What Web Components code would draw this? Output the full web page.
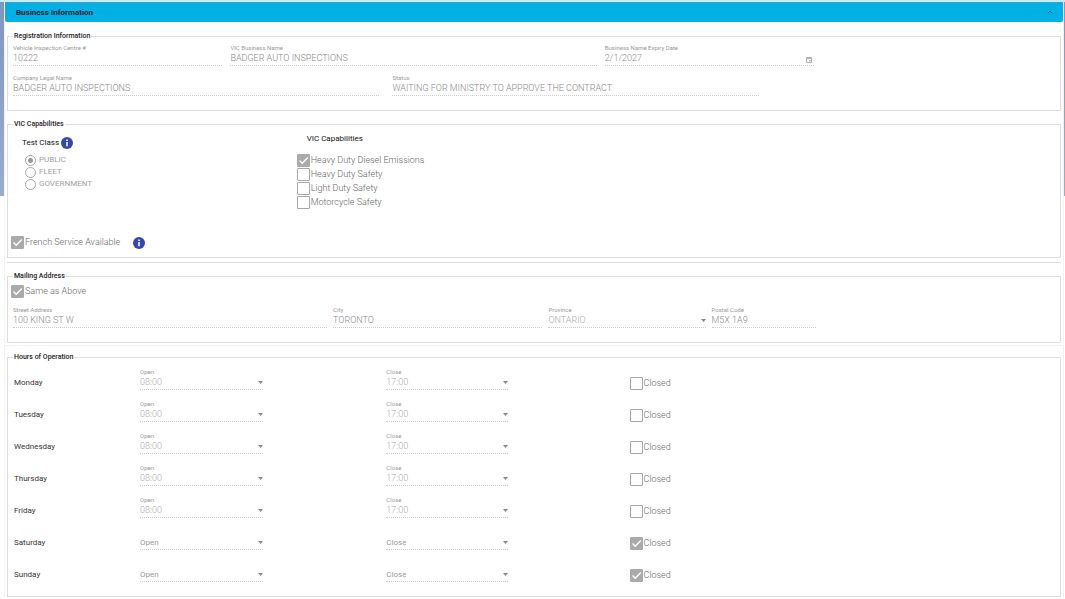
<!DOCTYPE html>
<html lang="en">
<head>
<meta charset="utf-8">
<meta name="viewport" content="width=device-width, initial-scale=1">
<title>Business Information</title>
<style>
  body { margin: 0; background: #fff; font-family: Roboto, "Liberation Sans", sans-serif; font-size: 9px; color: #333; }
  hr { margin: 4px 0 0; border: 0; border-top: 1px solid #dcdcdc; }
  field-set + field-set, hr + field-set { margin-top: 9px; }
  .w10 { flex: 0 0 10%; } .w15 { flex: 0 0 15%; } .w20 { flex: 0 0 20%; }
  .w30 { flex: 0 0 30%; } .w35 { flex: 0 0 35%; }
</style>
</head>
<body>
<vic-page>
  <expansion-panel heading="Business Information">
    <field-set legend="Registration Information">
      <field-row>
        <text-field class="w20" label="Vehicle Inspection Centre #" value="10222"></text-field>
        <text-field class="w35" label="VIC Business Name" value="BADGER AUTO INSPECTIONS"></text-field>
        <text-field class="w20" label="Business Name Expiry Date" value="2/1/2027" date></text-field>
      </field-row>
      <field-row wide>
        <text-field class="w35" label="Company Legal Name" value="BADGER AUTO INSPECTIONS"></text-field>
        <text-field class="w35" label="Status" value="WAITING FOR MINISTRY TO APPROVE THE CONTRACT"></text-field>
      </field-row>
    </field-set>
    <field-set legend="VIC Capabilities">
      <capability-panel></capability-panel>
    </field-set>
    <hr>
    <field-set legend="Mailing Address">
      <mailing-address></mailing-address>
    </field-set>
  </expansion-panel>
  <expansion-panel>
    <field-set legend="Hours of Operation">
      <hours-row day="Monday" open="08:00" close="17:00"></hours-row>
      <hours-row day="Tuesday" open="08:00" close="17:00"></hours-row>
      <hours-row day="Wednesday" open="08:00" close="17:00"></hours-row>
      <hours-row day="Thursday" open="08:00" close="17:00"></hours-row>
      <hours-row day="Friday" open="08:00" close="17:00"></hours-row>
      <hours-row day="Saturday" closed></hours-row>
      <hours-row day="Sunday" closed></hours-row>
    </field-set>
  </expansion-panel>
</vic-page>
<script>
const define = (name, render) => customElements.define(name, class extends HTMLElement {
  connectedCallback() {
    if (this.shadowRoot) return;
    this.attachShadow({ mode: 'open' }).innerHTML = render(this);
  }
});

define('vic-page', () => `
  <style>
    :host { display: block; padding: 2px 1px 0 4px;
      background: linear-gradient(#c4eefa, #c4eefa) 0 0 / 100% 2px no-repeat,
        linear-gradient(#7f95c2, #9dabc9) 0 0 / 100% 196px no-repeat, #fff; }
    main { display: block; }
  </style>
  <main><slot></slot></main>`);

define('expansion-panel', el => {
  const heading = el.getAttribute('heading');
  return `
  <style>
    :host { display: block; background: #fff; border: 1px solid #f2f2f2; border-width: 0 1px 0 1px; }
    :host(:not([heading])) { border-top-width: 1px; margin-top: 2px; }
    h1 { margin: 0; }
    button { display: flex; align-items: center; justify-content: space-between; width: 100%; height: 20px;
      box-sizing: border-box; padding: 0 10px 0 11px; border: 0; border-top: 1px solid #4a9cb8; border-radius: 0 0 2px 2px;
      background: #00b1e5; color: #10242c; font: bold 8px Roboto, sans-serif; }
    svg { margin-bottom: 2px; }
    .body { padding: 10px 2px 0 2px; }
    :host(:not([heading])) .body { padding-top: 7px; }
  </style>
  ${heading ? `<h1><button type="button" aria-expanded="true"><span>${heading}</span>
    <svg width="6" height="4" viewBox="0 0 6 4" aria-hidden="true"><path d="M1 3.200 3 1.200 5 3.200" fill="none" stroke="#0a4a60"/></svg></button></h1>` : ''}
  <div class="body"><slot></slot></div>`;
});

define('field-set', el => `
  <style>
    :host { display: block; }
    fieldset { margin: 0; padding: 0 0 14px 5px; border: 1px solid #dedede; min-width: 0; }
    legend { padding: 0 1px; font: 500 7px/8px Roboto, sans-serif; color: #222; }
  </style>
  <fieldset><legend>${el.getAttribute('legend')}</legend><slot></slot></fieldset>`);

define('field-row', () => `
  <style>
    :host { display: flex; gap: 8px; padding-top: 4px; }
    :host([wide]) { gap: 13px; padding-top: 8px; }
  </style><slot></slot>`);

const fieldCss = `
    :host { display: block; min-width: 0; }
    .field { display: flex; flex-direction: column; border-bottom: 1px dotted #ccc; }
    label { height: 8px; font: 6px/8px Roboto, sans-serif; color: #999; }
    .line { display: flex; align-items: center; height: 13px; }
    input, select { appearance: none; flex: 1; min-width: 0; width: 100%; height: 13px; margin: 0; padding: 0; border: 0; border-radius: 0;
      background: transparent; font: 300 9px/13px Roboto, sans-serif; color: #888; opacity: 1; }`;

define('text-field', el => `
  <style>${fieldCss}
    button { display: flex; padding: 2px 2px 0 0; border: 0; background: none; }
  </style>
  <div class="field"><label for="f">${el.getAttribute('label')}</label>
    <div class="line"><input id="f" type="text" disabled value="${el.getAttribute('value')}">
    ${el.hasAttribute('date') ? `<button type="button" disabled aria-label="Open calendar"><svg width="6" height="6" viewBox="0 0 6 6">
      <path d="M.5 .5h5v5h-5zM.5 1.500h5" fill="none" stroke="#b0b0b0"/><path d="M3 3h1.500v1.500h-1.500z" fill="#aaa"/></svg></button>` : ''}</div></div>`);

define('select-field', el => {
  const value = el.getAttribute('value'), label = el.getAttribute('label');
  return `
  <style>${fieldCss}
    select { color: #aaa; }
    .empty select { font-size: 8px; font-weight: 400; color: #999; }
    .empty label { visibility: hidden; }
  </style>
  <div class="field ${value ? '' : 'empty'}">${value ? `<label for="f">${label}</label>` : `<label for="f"></label>`}
    <div class="line"><select id="f" disabled aria-label="${label}"><option>${value || label}</option></select>
    <svg width="5" height="3" viewBox="0 0 5 3" aria-hidden="true"><path d="M0 0h5L2.500 3z" fill="#888"/></svg></div></div>`;
});

define('check-box', el => `
  <style>
    :host { display: block; }
    label { display: flex; align-items: center; gap: 1px; color: #666; font: 300 9px/13px Roboto, sans-serif; }
    .box { display: grid; }
    .box > * { grid-area: 1 / 1; }
    input { appearance: none; box-sizing: border-box; width: 13px; height: 13px; margin: 0; border: 1px solid #a6a6a6; border-radius: 1px; background: #fff; }
    input:checked { background: #aaa; border-color: #aaa; }
    svg { display: none; }
    input:checked + svg { display: block; }
  </style>
  <label><span class="box"><input type="checkbox" disabled ${el.hasAttribute('checked') ? 'checked' : ''}>
    <svg width="13" height="13" viewBox="0 0 13 13"><path d="M2.500 6.500 5.200 9.300 10.800 3.500" fill="none" stroke="#fff" stroke-width="1.300"/></svg></span>
    <span><slot></slot></span></label>`);

define('radio-option', el => `
  <style>
    :host { display: block; }
    label { display: flex; align-items: center; gap: 3px; color: #a0a0a0; font: 8px/12px Roboto, sans-serif; }
    input { appearance: none; box-sizing: border-box; width: 11px; height: 11px; margin: 0; border: 1px solid #a6a6a6; border-radius: 50%; background: #fff; }
    input:checked { background: radial-gradient(circle, #999 2px, #fff 3px); }
  </style>
  <label><input type="radio" name="test-class" disabled ${el.hasAttribute('checked') ? 'checked' : ''}><slot></slot></label>`);

define('info-button', el => `
  <style>
    :host { display: block; }
    button { display: block; padding: 0; border: 0; background: none; }
    svg { display: block; }
  </style>
  <button type="button" aria-label="${el.getAttribute('label')}"><svg width="12" height="12" viewBox="0 0 12 12">
    <circle cx="6" cy="6" r="6" fill="#3448b0"/><path d="M5.200 2.500h1.600v1.500H5.200zM5.200 5h1.600v4.300H5.200z" fill="#fff"/></svg></button>`);

define('capability-panel', () => `
  <style>
    :host { display: block; margin-bottom: -6px; }
    .top { display: grid; grid-template-columns: 27fr 73fr; }
    h2 { margin: 0; font: 400 8px/12px Roboto, sans-serif; color: #111; }
    .test { padding: 9px 0 0 9px; }
    .title { display: flex; align-items: center; gap: 2px; }
    .radios { padding: 5px 0 0 3px; }
    .caps { padding: 5px 0 0 1px; }
    .caps h2 { padding-left: 10px; }
    .checks { display: grid; gap: 1px; padding-top: 9px; }
    .french { display: flex; align-items: center; gap: 13px; margin-left: -2px; padding-top: 27px; }
  </style>
  <div class="top">
    <div class="test">
      <div class="title"><h2>Test Class</h2><info-button label="About test class"></info-button></div>
      <div class="radios" role="radiogroup" aria-label="Test Class">
        <radio-option checked>PUBLIC</radio-option><radio-option>FLEET</radio-option><radio-option>GOVERNMENT</radio-option>
      </div>
    </div>
    <div class="caps"><h2>VIC Capabilities</h2>
      <div class="checks">
        <check-box checked>Heavy Duty Diesel Emissions</check-box><check-box>Heavy Duty Safety</check-box>
        <check-box>Light Duty Safety</check-box><check-box>Motorcycle Safety</check-box>
      </div>
    </div>
  </div>
  <div class="french"><check-box checked>French Service Available</check-box><info-button label="About French service"></info-button></div>`);

define('mailing-address', () => `
  <style>
    :host { display: block; }
    .same { margin-left: -2px; padding-top: 5px; }
    .row { display: flex; gap: 6px; padding-top: 8px; }
    .w10 { flex: 0 0 10%; } .w15 { flex: 0 0 15%; } .w20 { flex: 0 0 20%; } .w30 { flex: 0 0 30%; }
  </style>
  <check-box class="same" checked>Same as Above</check-box>
  <div class="row">
    <text-field class="w30" label="Street Address" value="100 KING ST W"></text-field>
    <text-field class="w20" label="City" value="TORONTO"></text-field>
    <select-field class="w15" label="Province" value="ONTARIO"></select-field>
    <text-field class="w10" label="Postal Code" value="M5X 1A9"></text-field>
  </div>`);

define('hours-row', el => {
  const g = n => el.getAttribute(n) || '';
  return `
  <style>
    :host { display: grid; grid-template-columns: 127fr 246fr 243fr 430fr; align-items: end; padding-top: 10px; }
    :host(:first-of-type) { padding-top: 7px; }
    span { padding-left: 1px; font: 8px/14px Roboto, sans-serif; color: #333; }
    select-field { width: 50%; }
  </style>
  <span>${g('day')}</span>
  <select-field label="Open" value="${g('open')}"></select-field>
  <select-field label="Close" value="${g('close')}"></select-field>
  <check-box ${el.hasAttribute('closed') ? 'checked' : ''}>Closed</check-box>`;
});
</script>
</body>
</html>
